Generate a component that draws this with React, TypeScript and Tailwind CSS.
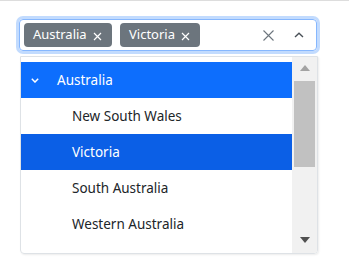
import React from 'react';

const Tag: React.FC<{ label: string; w: string }> = ({ label, w }) => (
  <span className={`flex h-[24px] ${w} items-center justify-between rounded-[4px] bg-[#6c757d] pl-[9px] pr-[10px] text-[13px] text-white`}>
    <span>{label}</span>
    <svg width="9" height="9" viewBox="0 0 9 9" className="mt-[2px]">
      <path d="M1 1L8 8M8 1L1 8" stroke="white" strokeWidth="1.2" />
    </svg>
  </span>
);

const rows = [
  { label: 'Australia', kind: 'group' },
  { label: 'New South Wales', kind: 'item' },
  { label: 'Victoria', kind: 'selected' },
  { label: 'South Australia', kind: 'item' },
  { label: 'Western Australia', kind: 'item' },
];

export default function App() {
  return (
    <div
      className="h-[275px] w-[349px] border-t border-[#dddddd] bg-white pl-[19px] pt-[18px] text-[#212529]"
      style={{ fontFamily: '"Noto Sans", "Open Sans", sans-serif' }}
    >
      {/* select box with focus ring */}
      <div className="flex h-[32px] w-[298px] items-center gap-[8px] rounded-[4px] border border-[#86b7fe] px-[4px] shadow-[0_0_0_3px_rgba(13,110,253,0.25)]">
        <Tag label="Australia" w="w-[88px]" />
        <Tag label="Victoria" w="w-[80px]" />
        <div className="ml-auto flex items-center gap-[20px] pr-[8px]">
          <svg width="11" height="11" viewBox="0 0 11 11">
            <path d="M0.5 0.5L10.5 10.5M10.5 0.5L0.5 10.5" stroke="#6c757d" strokeWidth="1.1" />
          </svg>
          <svg width="10" height="6" viewBox="0 0 10 6">
            <path d="M1 5L5 1.3L9 5" stroke="#495057" strokeWidth="1.4" fill="none" />
          </svg>
        </div>
      </div>

      {/* dropdown */}
      <div className="ml-[1px] mt-[5px] flex h-[198px] w-[298px] overflow-hidden rounded-b-[4px] border border-[#dee2e6] shadow-[1px_1px_2px_rgba(0,0,0,0.08)]">
        <div className="flex-1 pt-[5px] text-[13.5px]">
          {rows.map((r) => {
            if (r.kind === 'group') {
              return (
                <div key={r.label} className="flex h-[36px] items-center bg-[#0d6efd] pl-[10px] text-white">
                  <svg width="8" height="5" viewBox="0 0 8 5" className="mr-[18px]">
                    <path d="M0.8 0.8L4 4L7.2 0.8" stroke="white" strokeWidth="1.5" fill="none" />
                  </svg>
                  {r.label}
                </div>
              );
            }
            return (
              <div
                key={r.label}
                className={`flex h-[36px] items-center pl-[51px] ${
                  r.kind === 'selected' ? 'bg-[#0b5fe6] text-white' : 'text-[#212529]'
                }`}
              >
                {r.label}
              </div>
            );
          })}
        </div>
        {/* scrollbar */}
        <div className="flex w-[25px] flex-col items-center bg-[#f1f1f1] pb-[10px] pt-[8px]">
          <svg width="10" height="6" viewBox="0 0 10 6">
            <path d="M5 0L10 6H0Z" fill="#a3a3a3" />
          </svg>
          <div className="mt-[10px] h-[86px] w-[21px] bg-[#c1c1c1]" />
          <div className="flex-1" />
          <svg width="10" height="6" viewBox="0 0 10 6">
            <path d="M0 0H10L5 6Z" fill="#505050" />
          </svg>
        </div>
      </div>
    </div>
  );
}
